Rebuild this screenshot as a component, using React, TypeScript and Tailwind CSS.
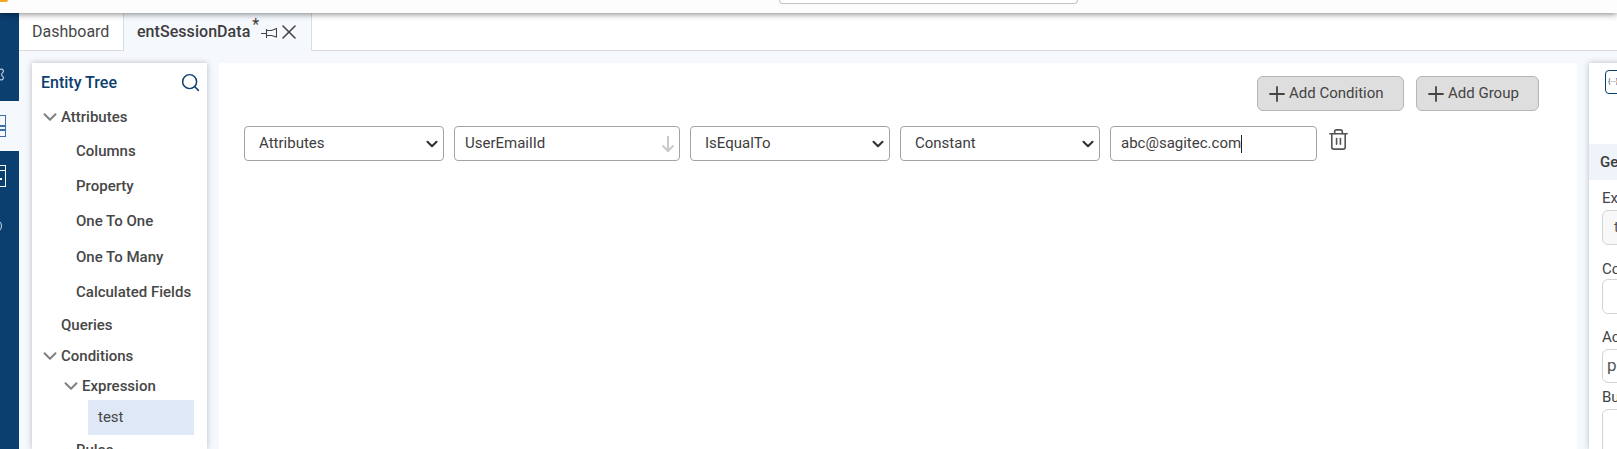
import { ChevronDown, Plus, Search, Settings, Trash2, X } from "lucide-react";

const selectClass =
  "h-[35px] flex items-center justify-between rounded-[4px] border border-[#a3a3a3] bg-white text-[15px] text-[#3d3d3d]";

function SelectBox({ label, width }: { label: string; width: string }) {
  return (
    <div className={`${selectClass} pl-[14px] pr-[2px] ${width}`}>
      <span>{label}</span>
      <ChevronDown className="w-[18px] h-[18px] text-[#333]" strokeWidth={2.8} />
    </div>
  );
}

function TreeRow({
  label,
  indent,
  height,
  open,
}: {
  label: string;
  indent: string;
  height: string;
  open?: boolean;
}) {
  return (
    <div className={`flex items-center font-medium text-[15px] text-[#474747] ${indent} ${height}`}>
      {open && (
        <ChevronDown className="w-[22px] h-[22px] text-[#808080] ml-[-22px] shrink-0" strokeWidth={2.2} />
      )}
      <span>{label}</span>
    </div>
  );
}

function AddButton({ label, width }: { label: string; width: string }) {
  return (
    <button
      className={`h-[35px] flex items-center pl-[7px] rounded-[6px] border border-[#b5b5b5] bg-[#dedede] text-[15px] text-[#444] ${width}`}
    >
      <Plus className="w-[24px] h-[24px] text-[#444]" strokeWidth={1.8} />
      {label}
    </button>
  );
}

function SideField({
  label,
  value,
  top,
  gap,
  height,
  valueClass,
  muted,
}: {
  label: string;
  value?: string;
  top: string;
  gap: string;
  height: string;
  valueClass?: string;
  muted?: boolean;
}) {
  return (
    <div className={`px-[13px] ${top}`}>
      <div className={`text-[15px] leading-[17px] text-[#444] ${gap}`}>{label}</div>
      <div
        className={`w-[260px] rounded-[6px] border border-[#d4d4d4] flex items-center text-[#555] ${height} ${valueClass ?? "pl-[11px] text-[15px]"} ${muted ? "bg-[#f8f8f8]" : "bg-white"}`}
      >
        {value}
      </div>
    </div>
  );
}

export default function App() {
  return (
    <div
      className="w-[1617px] h-[449px] overflow-hidden flex flex-col bg-white"
      style={{ fontFamily: "Roboto, sans-serif" }}
    >
      {/* browser strip */}
      <div className="h-[13px] shrink-0 relative z-10 bg-[#fdfdfd] flex shadow-[0_1px_6px_rgba(0,0,0,0.5)]">
        <div className="absolute left-0 top-0 w-[8px] h-[2px] bg-[#f5a623] rounded-br-[3px]" />
        <div className="w-[299px] h-[4px] ml-[779px] rounded-b-[7px] border border-t-0 border-[#c4c4c4] bg-white" />
      </div>

      <div className="flex flex-1 min-h-0">
        {/* nav rail */}
        <div className="w-[19px] shrink-0 bg-[#0b3f70] flex flex-col overflow-hidden text-white">
          <div className="h-[50px] mt-[38px] pb-[3px] flex items-center">
            <Settings className="w-[21px] h-[21px] ml-[-15px] shrink-0 opacity-80" strokeWidth={1.2} />
          </div>
          <div className="h-[50px] bg-[#f5f9fe] flex items-center">
            <div className="w-[22px] h-[22px] ml-[-16px] shrink-0 border border-[#3b6ea5] flex flex-col justify-center items-end gap-[2px] pt-[3px]">
              <span className="w-[5px] h-[2px] bg-[#3b6ea5]" />
              <span className="w-[5px] h-[2px] bg-[#3b6ea5]" />
            </div>
          </div>
          <div className="h-[50px] flex items-center">
            <div className="w-[22px] h-[22px] ml-[-16px] shrink-0 border border-white flex flex-col">
              <span className="h-[5px] border-b border-white" />
              <span className="flex-1 flex items-center justify-end pr-[3px]">
                <span className="w-[2px] h-[2px] bg-white" />
              </span>
            </div>
          </div>
          <div className="h-[50px] flex items-center">
            <div className="w-[14px] h-[14px] ml-[-12px] shrink-0 rounded-full border border-white opacity-80" />
          </div>
        </div>

        <div className="flex-1 min-w-0 flex flex-col">
          {/* tabs */}
          <div className="h-[38px] shrink-0 flex border-b border-[#d9dde2] bg-white">
            <div className="w-[104px] flex items-center pl-[13px] text-[16px] text-[#474747]">Dashboard</div>
            <div className="w-[189px] h-[38px] flex items-center pl-[13px] bg-[#f5f9fe] border-x border-[#d9dde2] text-[16px] font-medium tracking-[0.05px] text-[#3d3d3d]">
              entSessionData
              <span className="self-start mt-[4px] ml-[2px] text-[16px] leading-[16px] font-normal">*</span>
              <svg className="w-[16px] h-[12px] ml-[2px] mt-[2px] text-[#444]" viewBox="0 0 16 12" fill="none" stroke="currentColor" strokeWidth="1.1">
                <path d="M0 6.5h5M5.5 2v9M5.5 3.5h5L15.5 1.5V10l-5-1.5h-5" />
              </svg>
              <X className="w-[24px] h-[24px] text-[#444]" strokeWidth={1.6} />
            </div>
          </div>

          {/* body */}
          <div className="flex-1 min-h-0 flex bg-[#f5f9fe] pt-[12px] pl-[13px]">
            <div className="w-[175px] shrink-0 bg-white shadow-[0_0_6px_rgba(0,0,0,0.25)] pl-[9px] pt-[3px] overflow-hidden">
              <div className="h-[34px] flex items-center justify-between pr-[6px] text-[16px] font-medium text-[#0b3f70]">
                <span className="mt-[-1px]">Entity Tree</span>
                <Search className="w-[21px] h-[21px] mt-[-2px]" strokeWidth={1.7} />
              </div>
              <TreeRow label="Attributes" indent="pl-[20px]" height="h-[34px]" open />
              <TreeRow label="Columns" indent="pl-[35px]" height="h-[35px]" />
              <TreeRow label="Property" indent="pl-[35px]" height="h-[35px]" />
              <TreeRow label="One To One" indent="pl-[35px]" height="h-[35px]" />
              <TreeRow label="One To Many" indent="pl-[35px]" height="h-[36px]" />
              <TreeRow label="Calculated Fields" indent="pl-[35px]" height="h-[35px]" />
              <TreeRow label="Queries" indent="pl-[20px]" height="h-[30px]" />
              <TreeRow label="Conditions" indent="pl-[20px]" height="h-[32px]" open />
              <TreeRow label="Expression" indent="pl-[41px]" height="h-[28px]" open />
              <div className="ml-[47px] w-[106px] h-[35px] bg-[#dfe8f6] flex items-center pl-[10px] text-[15px] text-[#474747]">
                test
              </div>
              <TreeRow label="Rules" indent="pl-[35px]" height="h-[30px]" />
            </div>

            <div className="w-[1358px] shrink-0 ml-[12px] bg-white pt-[13px] pl-[25px]">
              <div className="w-[1295px] flex justify-end gap-[12px]">
                <AddButton label="Add Condition" width="w-[147px]" />
                <AddButton label="Add Group" width="w-[123px]" />
              </div>
              <div className="mt-[15px] flex items-start gap-[10px]">
                <SelectBox label="Attributes" width="w-[200px]" />
                <div className={`${selectClass} pl-[10px] pr-[4px] w-[226px]`}>
                  <span>UserEmailId</span>
                  <svg className="w-[14px] h-[18px] text-[#c9c9c9]" viewBox="0 0 14 18" fill="none" stroke="currentColor" strokeWidth="2">
                    <path d="M7 1v15M1.5 10.5 7 16l5.5-5.5" />
                  </svg>
                </div>
                <SelectBox label="IsEqualTo" width="w-[200px]" />
                <SelectBox label="Constant" width="w-[200px]" />
                <div className="w-[207px] h-[35px] flex items-center rounded-[4px] border border-[#a3a3a3] pl-[10px] text-[15px] text-[#3d3d3d]">
                  abc@sagitec.com
                  <span className="w-[1px] h-[18px] bg-[#222]" />
                </div>
                <Trash2 className="w-[23px] h-[23px] mt-[2px] text-[#555]" strokeWidth={1.7} />
              </div>
            </div>

            <div className="w-[300px] shrink-0 ml-[12px] bg-white shadow-[0_0_6px_rgba(0,0,0,0.25)]">
              <div className="h-[81px] pt-[7px] pl-[16px]">
                <div className="w-[26px] h-[24px] rounded-[4px] border-[1.5px] border-[#0b3f70] text-[7px] leading-[22px] pl-[2px] text-[#0b3f70]">
                  {"{···}"}
                </div>
              </div>
              <div className="h-[36px] bg-[#eef4f9] flex items-center pl-[11px] pt-[1px] text-[15px] font-medium text-[#3d3d3d]">
                General
              </div>
              <SideField label="Expression" value="test" top="mt-[10px]" gap="mb-[3px]" height="h-[35px]" muted />
              <SideField label="Condition" top="mt-[16px]" gap="mb-[1px]" height="h-[35px]" />
              <SideField label="Active" value="p" top="mt-[15px]" gap="mb-[3px]" height="h-[34px]" valueClass="pl-[4px] text-[17px]" />
              <SideField label="Business" top="mt-[6px]" gap="mb-[3px]" height="h-[60px]" />
            </div>
          </div>
        </div>
      </div>
    </div>
  );
}
